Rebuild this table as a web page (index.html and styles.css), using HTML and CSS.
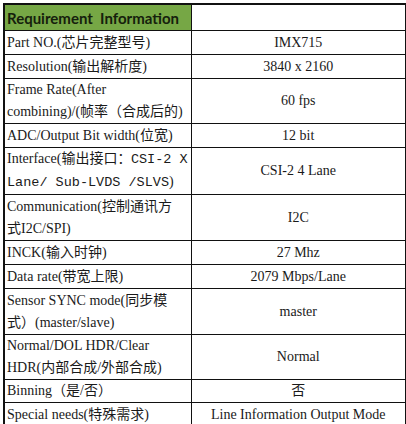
FILE: index.html
```html
<!DOCTYPE html>
<html>
<head>
<meta charset="utf-8">
<link rel="stylesheet" href="styles.css">
</head>
<body>
<table class="spec">
  <colgroup><col class="c1"><col class="c2"></colgroup>
  <tr class="r-head"><td class="head">Requirement&nbsp; Information</td><td></td></tr>
  <tr class="r1"><td class="lbl">Part NO.(芯片完整型号)</td><td class="val">IMX715</td></tr>
  <tr class="r1"><td class="lbl">Resolution(输出解析度)</td><td class="val">3840 x 2160</td></tr>
  <tr class="r2"><td class="lbl">Frame Rate(After<br>combining)/(帧率（合成后的)</td><td class="val">60 fps</td></tr>
  <tr class="r1"><td class="lbl">ADC/Output Bit width(位宽)</td><td class="val">12 bit</td></tr>
  <tr class="r2"><td class="lbl">Interface(输出接口<span class="mono">：CSI-2 X<br>Lane/ Sub-LVDS /SLVS</span>)</td><td class="val">CSI-2 4 Lane</td></tr>
  <tr class="r2b"><td class="lbl">Communication(控制通讯方<br>式I2C/SPI)</td><td class="val">I2C</td></tr>
  <tr class="r1"><td class="lbl">INCK(输入时钟)</td><td class="val">27 Mhz</td></tr>
  <tr class="r1"><td class="lbl">Data rate(带宽上限)</td><td class="val">2079 Mbps/Lane</td></tr>
  <tr class="r2b"><td class="lbl">Sensor SYNC mode(同步模<br>式）(master/slave)</td><td class="val">master</td></tr>
  <tr class="r2c"><td class="lbl">Normal/DOL HDR/Clear<br>HDR(内部合成/外部合成)</td><td class="val">Normal</td></tr>
  <tr class="r1b"><td class="lbl">Binning（是/否）</td><td class="val">否</td></tr>
  <tr class="r1"><td class="lbl">Special needs(特殊需求)</td><td class="val">Line Information Output Mode</td></tr>
</table>
</body>
</html>
```
FILE: styles.css
```css
html, body {
  margin: 0;
  padding: 0;
  background: #ffffff;
}
.spec {
  margin: 3px 0 0 3px;
  border-collapse: collapse;
  table-layout: fixed;
  width: 402px;
  border: 2px solid #111;
  font-family: "Liberation Serif", "Noto Sans CJK SC", serif;
  font-size: 14px;
  color: #1a1a1a;
}
.c1 { width: 187px; }
.c2 { width: 215px; }
.spec td {
  border: 1px solid #111;
  padding: 0 2px;
  line-height: 22px;
  vertical-align: middle;
  white-space: nowrap;
  overflow: hidden;
}
.r-head td { height: 25px; }
.r1 td { height: 23px; }
.r1b td { height: 22px; }
.r2 td { height: 44px; }
.r2b td { height: 45px; }
.r2c td { height: 43px; }
.head {
  background: #76a745;
  font-family: "Lato", "Liberation Sans", sans-serif;
  font-weight: bold;
  font-size: 15px;
  color: #15200c;
  padding-left: 3px;
}
.lbl { text-align: left; }
.val { text-align: center; }
.mono {
  font-family: "Liberation Mono", "Noto Sans CJK SC", monospace;
  font-size: 13.5px;
}
```
